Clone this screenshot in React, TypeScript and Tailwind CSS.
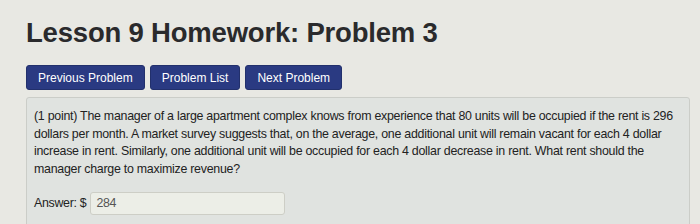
import React from 'react';

const buttons = ['Previous Problem', 'Problem List', 'Next Problem'];

const App: React.FC = () => {
  return (
    <div
      className="w-[700px] h-[224px] overflow-hidden bg-[#e8e8e3] text-[#262626]"
      style={{ fontFamily: '"Liberation Sans", Arial, sans-serif' }}
    >
      <div className="pl-[26px] pt-[16px]">
        <h1 className="text-[27.5px] leading-[34px] font-bold text-[#2a2a2c] tracking-[-0.2px]">
          Lesson 9 Homework: Problem 3
        </h1>
        <div className="mt-[15px] flex gap-[5px]">
          {buttons.map((label) => (
            <button
              key={label}
              type="button"
              className="h-[25px] px-[11px] rounded-[3px] bg-[#2a3a82] text-white text-[12px] border border-[#22306c]"
            >
              {label}
            </button>
          ))}
        </div>
        <div className="mt-[7px] mr-[10px] h-[140px] border border-[#cbcdc8] rounded-[3px] bg-[#e0e3e0] px-[7px] pt-[10px]">
          <p className="text-[12.4px] leading-[17.5px] tracking-[-0.26px] text-[#222]">
            (1 point) The manager of a large apartment complex knows from experience that 80 units will be occupied if the rent is 296 dollars per month. A market survey suggests that, on the average, one additional unit will remain vacant for each 4 dollar increase in rent. Similarly, one additional unit will be occupied for each 4 dollar decrease in rent. What rent should the manager charge to maximize revenue?
          </p>
          <div className="mt-[14px] flex items-center gap-[4px] text-[12.4px] tracking-[-0.3px] text-[#222]">
            <span>Answer: $</span>
            <div className="w-[195px] h-[23px] border border-[#cdcec6] rounded-[3px] bg-[#eceee7] px-[5px] flex items-center text-[#555]">
              284
            </div>
          </div>
        </div>
      </div>
    </div>
  );
};

export default App;
